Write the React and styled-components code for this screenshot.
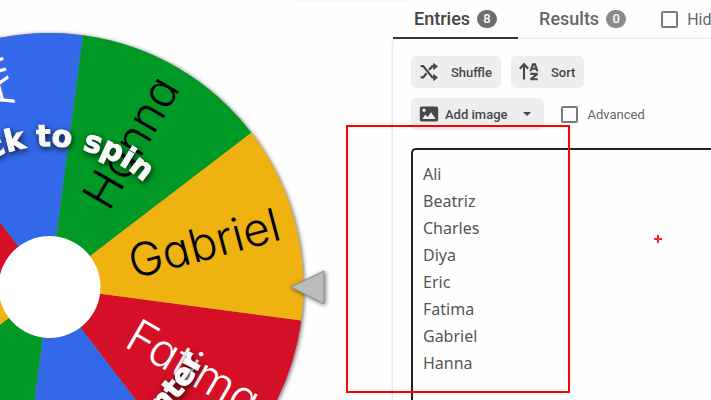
import React, { useState } from "react";

import styled, { createGlobalStyle, css } from "styled-components";

const GlobalStyle = createGlobalStyle`
  * {
    box-sizing: border-box;
  }
  body {
    margin: 0;
    background-color: #fefefe;
    font-family: Roboto, "Liberation Sans", sans-serif;
    overflow: hidden;
  }
`;

const Page = styled.main`
  position: relative;
  display: grid;
  grid-template-columns: 393fr 318fr;
  height: 100vh;
  overflow: hidden;
`;

const WheelPane = styled.section`
  min-width: 0;
  overflow: hidden;
`;

const WheelSvg = styled.svg`
  display: block;
  width: 100%;
  height: 100%;
`;

const SliceName = styled.text`
  font-family: Inter, sans-serif;
  font-size: 46px;
  font-weight: 300;
  font-feature-settings: "cv11";
  text-anchor: end;
`;

const ArcText = styled.text`
  font-family: "DejaVu Sans", sans-serif;
  font-size: 30px;
  font-weight: 700;
  fill: #fafafa;
  stroke: #fafafa;
  stroke-width: 1px;
  text-anchor: ${({ $anchor }) => $anchor || "middle"};
  filter: drop-shadow(1px 2px 3px rgba(0, 0, 0, 0.8));
`;

const SidePanel = styled.aside`
  display: flex;
  flex-direction: column;
  min-width: 0;
  white-space: nowrap;
`;

const TabBar = styled.div`
  display: flex;
  flex: none;
  height: 39px;
`;

const Tab = styled.button`
  display: flex;
  align-items: center;
  gap: 7px;
  padding: 0 21px;
  border: none;
  border-bottom: 2px solid transparent;
  background: none;
  color: #666666;
  font-family: inherit;
  font-size: 18px;
  font-weight: 500;
  cursor: pointer;
  ${({ $active }) =>
    $active &&
    css`
      color: #444444;
      border-bottom-color: #3a3a3e;
    `}
`;

const Badge = styled.span`
  width: 20px;
  border-radius: 9px;
  background-color: ${({ $active }) => ($active ? "#6e6e6e" : "#8a8a8a")};
  color: #ffffff;
  font-size: 13px;
  line-height: 18px;
  text-align: center;
`;

const CheckLabel = styled.label`
  display: flex;
  align-items: center;
  gap: 9px;
  margin-left: ${({ $indent }) => $indent || 0}px;
  color: #666666;
  font-size: ${({ $size }) => $size}px;
`;

const CheckBox = styled.input`
  appearance: none;
  flex: none;
  width: 17px;
  height: 17px;
  margin: 0;
  border: 2px solid #7b7b7b;
  border-radius: 2px;
  &:checked {
    background-color: #7b7b7b;
  }
`;

const Card = styled.div`
  display: flex;
  flex: 1;
  flex-direction: column;
  padding: 17px 0 0 18px;
  border-radius: 5px 0 0 0;
  box-shadow: 0 0 3px rgba(0, 0, 0, 0.25);
`;

const Toolbar = styled.div`
  display: flex;
  gap: 10px;
  margin-bottom: 10px;
`;

const ToolButton = styled.button`
  display: flex;
  align-items: center;
  gap: ${({ $gap }) => $gap}px;
  height: 32px;
  padding: 0 9px 0 8px;
  border: none;
  border-radius: 5px;
  background-color: #eeeeee;
  color: #484848;
  font-family: inherit;
  font-size: 13px;
  font-weight: 500;
  cursor: pointer;
`;

const Icon = styled.svg`
  flex: none;
  width: 20px;
  height: 20px;
  fill: currentColor;
`;

const Caret = styled(Icon)`
  width: 16px;
  margin-left: 6px;
`;

const NameList = styled.textarea`
  flex: 1;
  width: 100%;
  margin-top: 8px;
  padding: 11px 10px;
  border: 2px solid #222222;
  border-right: none;
  border-bottom: none;
  border-radius: 5px 0 0 0;
  outline: none;
  background: none;
  color: #555555;
  font-family: "Noto Sans", sans-serif;
  font-size: 16px;
  line-height: 27px;
  resize: none;
`;

const MenuShadow = styled.div`
  position: absolute;
  top: -10px;
  left: 296px;
  width: 116px;
  height: 9px;
  box-shadow: 0 0 4px rgba(0, 0, 0, 0.12);
`;

const Highlight = styled.div`
  position: absolute;
  top: 125px;
  left: 346px;
  width: 224px;
  height: 268px;
  border: 2px solid #ff0000;
  pointer-events: none;
`;

const Cross = styled.svg`
  position: absolute;
  top: 235px;
  left: 654px;
  width: 8px;
  height: 8px;
  stroke: #ff2020;
  stroke-width: 2px;
  pointer-events: none;
`;

const names = ["Ali", "Beatriz", "Charles", "Diya", "Eric", "Fatima", "Gabriel", "Hanna"];

const slices = [
  { name: "Fatima", fill: "#d50f25", ink: "#ffffff" },
  { name: "Eric", fill: "#3369e8", ink: "#ffffff" },
  { name: "Diya", fill: "#009925", ink: "#000000" },
  { name: "Charles", fill: "#eeb211", ink: "#000000" },
  { name: "Beatriz", fill: "#d50f25", ink: "#ffffff" },
  { name: "Ali", fill: "#3369e8", ink: "#ffffff" },
  { name: "Hanna", fill: "#009925", ink: "#000000" },
  { name: "Gabriel", fill: "#eeb211", ink: "#000000" },
];

const RADIUS = 254;
const STEP = 360 / slices.length;
const START = 7.6;

const edge = (deg) => {
  const rad = (deg * Math.PI) / 180;
  return `${RADIUS * Math.cos(rad)} ${RADIUS * Math.sin(rad)}`;
};

const Wheel = () => (
  <WheelSvg viewBox="0 0 393 400" preserveAspectRatio="xMinYMin slice" role="img" aria-label="Wheel of names">
    <defs>
      <filter id="shade" x="-20%" y="-20%" width="140%" height="140%">
        <feDropShadow dx="1" dy="1" stdDeviation="2" floodOpacity="0.6" />
      </filter>
      <path id="topArc" d="M-141 0A141 141 0 0 1 141 0" />
      <path id="bottomArc" d="M-170 0A170 170 0 0 0 170 0" />
    </defs>
    <g transform="translate(49.5 287)">
      <circle r={RADIUS} fill="#888888" filter="url(#shade)" />
      {slices.map((slice, index) => {
        const from = START + index * STEP;
        return (
          <path
            key={slice.name}
            d={`M0 0L${edge(from)}A${RADIUS} ${RADIUS} 0 0 1 ${edge(from + STEP)}Z`}
            fill={slice.fill}
          />
        );
      })}
      {slices.map((slice, index) => (
        <SliceName
          key={slice.name}
          x="238"
          y="14"
          fill={slice.ink}
          transform={`rotate(${START + (index + 0.5) * STEP})`}
        >
          {slice.name}
        </SliceName>
      ))}
      <circle r="51" fill="#ffffff" />
      <ArcText>
        <textPath href="#topArc" startOffset="50%">Click to spin</textPath>
      </ArcText>
      <ArcText $anchor="end">
        <textPath href="#bottomArc" startOffset="86%">or press ctrl+enter</textPath>
      </ArcText>
    </g>
    <path d="M291 287L324 271V304Z" fill="#bbbbbb" stroke="#888888" filter="url(#shade)" />
  </WheelSvg>
);

const App = () => {
  const [tab, setTab] = useState("entries");
  const [text, setText] = useState(names.join("\n"));

  return (
    <>
      <GlobalStyle />
      <Page>
        <WheelPane>
          <Wheel />
        </WheelPane>
        <SidePanel>
          <TabBar>
            <Tab $active={tab === "entries"} onClick={() => setTab("entries")}>
              Entries <Badge $active={tab === "entries"}>8</Badge>
            </Tab>
            <Tab $active={tab === "results"} onClick={() => setTab("results")}>
              Results <Badge $active={tab === "results"}>0</Badge>
            </Tab>
            <CheckLabel $size={16} $indent={14}>
              <CheckBox type="checkbox" /> Hide
            </CheckLabel>
          </TabBar>
          <Card>
            <Toolbar>
              <ToolButton $gap={12}>
                <Icon viewBox="0 0 24 24">
                  <path
                    d="M2 5H5L16 18.500H19M2 18.500H5L9 13.500M12 9.500L16 5H19"
                    fill="none"
                    stroke="currentColor"
                    strokeWidth="2.600"
                  />
                  <path d="M17 1L23 5.500L17 10ZM17 14L23 18.500L17 23Z" />
                </Icon>
                Shuffle
              </ToolButton>
              <ToolButton $gap={12}>
                <Icon viewBox="0 0 24 24">
                  <path d="M6 2V21M1 8L6 2.500L11 8" fill="none" stroke="currentColor" strokeWidth="2.600" />
                  <path
                    fillRule="evenodd"
                    d="M12.500 11L16 1.500H20L23.500 11H20.700L20.200 9.300H15.800L15.300 11ZM16.700 7H19.300L18 3.500ZM13.500 13H22.500V15.500L17.500 19.500H22.500V22H13.500V19.500L18.500 15.500H13.500Z"
                  />
                </Icon>
                Sort
              </ToolButton>
            </Toolbar>
            <Toolbar>
              <ToolButton $gap={6}>
                <Icon viewBox="0 0 24 24">
                  <path
                    fillRule="evenodd"
                    d="M3 3H21Q23 3 23 5V19Q23 21 21 21H3Q1 21 1 19V5Q1 3 3 3ZM4 18H20L14.500 10L10.500 15.500L7.500 12.500ZM6 5.500A2 2 0 1 0 6 9.500A2 2 0 1 0 6 5.500Z"
                  />
                </Icon>
                Add image
                <Caret viewBox="0 0 16 20">
                  <path d="M4 8L8 12L12 8Z" />
                </Caret>
              </ToolButton>
              <CheckLabel $size={13} $indent={7}>
                <CheckBox type="checkbox" /> Advanced
              </CheckLabel>
            </Toolbar>
            <NameList aria-label="Entries" value={text} spellCheck={false} onChange={(e) => setText(e.target.value)} />
          </Card>
        </SidePanel>
        <MenuShadow />
        <Highlight />
        <Cross viewBox="0 0 8 8">
          <path d="M4 0V8M0 4H8" />
        </Cross>
      </Page>
    </>
  );
};

export default App;
